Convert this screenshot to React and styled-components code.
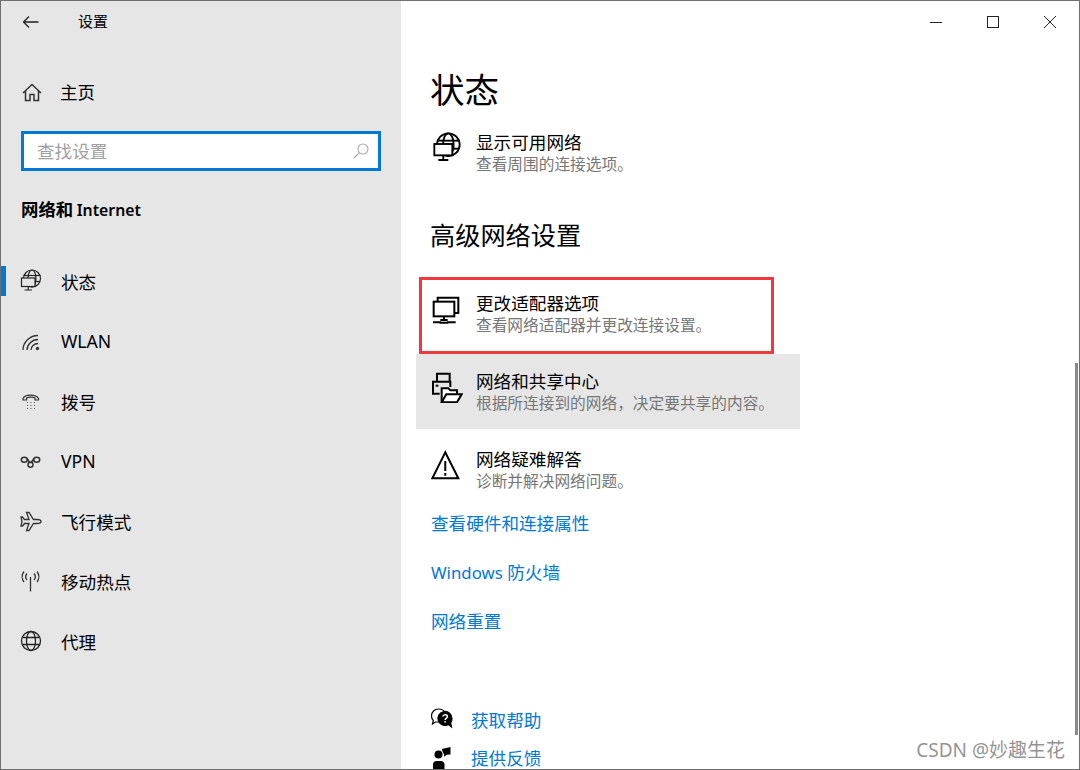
import React from "react";
import styled, { createGlobalStyle } from "styled-components";

const FONT = `"Noto Sans", "Noto Sans CJK SC", sans-serif`;

const Global = createGlobalStyle`
  html, body { margin: 0; padding: 0; background: #fff; }
  *, *::before, *::after { box-sizing: border-box; }
`;

const Window = styled.div`
  position: relative;
  display: flex;
  width: 1080px;
  height: 770px;
  overflow: hidden;
  border: 1px solid #6f6f6f;
  background: #fff;
  font-family: ${FONT};
  color: #000;
`;

const Sidebar = styled.aside`
  flex: 0 0 400px;
  display: flex;
  flex-direction: column;
  background: #e6e6e6;
`;

const TitleBar = styled.div`
  display: flex;
  align-items: center;
  gap: 35px;
  height: 41px;
  padding-left: 18px;
  font-size: 15px;
`;

const HomeRow = styled.div`
  display: flex;
  align-items: center;
  gap: 17px;
  height: 40px;
  margin-top: 30px;
  padding-left: 18px;
  font-size: 17.6px;
`;

const Label = styled.span`
  padding-bottom: 2px;
`;

const SearchBox = styled.div`
  display: flex;
  align-items: center;
  justify-content: space-between;
  width: 360px;
  height: 40px;
  margin: 19px 0 0 20px;
  padding: 0 9px 0 13px;
  background: #fff;
  border: 3px solid #0078d7;
  color: #a0a0a0;
  font-size: 17.6px;
`;

const SectionName = styled.div`
  height: 24px;
  margin: 26px 0 0 20px;
  line-height: 24px;
  font-size: 17.4px;
  font-weight: 700;
  white-space: nowrap;
`;

const Latin = styled.span`
  margin-left: -1px;
  font-size: 15.8px;
  font-weight: 600;
`;

const Nav = styled.nav`
  display: flex;
  flex-direction: column;
  margin-top: 30px;
`;

const NavItem = styled.div`
  position: relative;
  display: flex;
  align-items: center;
  gap: 18px;
  height: 60px;
  padding-left: 18px;
  font-size: 17.6px;
  &::before {
    content: "";
    display: ${(p) => (p.$active ? "block" : "none")};
    position: absolute;
    left: 0;
    top: 15px;
    width: 5px;
    height: 30px;
    background: #0078d7;
  }
`;

const Main = styled.main`
  flex: 1;
  display: flex;
  flex-direction: column;
  padding-left: 15px;
`;

const Controls = styled.div`
  display: flex;
  justify-content: flex-end;
  align-items: center;
  gap: 33px;
  height: 42px;
  padding-right: 17px;
  flex: none;
`;

const PageTitle = styled.h1`
  margin: 24px 0 0 14px;
  height: 48px;
  line-height: 46px;
  font-size: 34.5px;
  font-weight: 400;
  flex: none;
`;

const SectionTitle = styled.h2`
  margin: 24px 0 23px 14px;
  height: 36px;
  line-height: 36px;
  font-size: 25.2px;
  font-weight: 400;
  flex: none;
`;

const Row = styled.div`
  position: relative;
  flex: none;
  display: flex;
  align-items: flex-start;
  gap: 13px;
  width: 384px;
  height: 75px;
  margin-bottom: 3px;
  padding: 16px 0 0 15px;
  background: ${(p) => (p.$hover ? "#e6e6e6" : "transparent")};
  &::after {
    content: "";
    display: ${(p) => (p.$marked ? "block" : "none")};
    position: absolute;
    z-index: 1;
    left: 3px;
    top: 1px;
    width: 355px;
    height: 77px;
    border: 3px solid #f0383e;
  }
`;

const RowIcon = styled.div`
  flex: none;
  width: 32px;
  height: 32px;
  margin-top: 1px;
`;

const RowText = styled.div`
  display: flex;
  flex-direction: column;
  white-space: nowrap;
`;

const RowTitle = styled.div`
  line-height: 22px;
  font-size: 17.6px;
`;

const RowSub = styled.div`
  line-height: 22px;
  font-size: 15.7px;
  color: #767676;
`;

const Links = styled.div`
  display: flex;
  flex-direction: column;
  gap: 24.5px;
  margin: 1px 0 0 15px;
  flex: none;
`;

const LinkText = styled.a`
  display: block;
  line-height: 24px;
  font-size: 17.6px;
  color: #0078d7;
`;

const LatinLink = styled.span`
  font-size: 16.8px;
`;

const Footer = styled.div`
  display: flex;
  flex-direction: column;
  gap: 14px;
  margin: 75px 0 0 14px;
  flex: none;
`;

const FooterRow = styled.div`
  display: flex;
  align-items: center;
  gap: 17px;
  height: 24px;
`;

const Thumb = styled.div`
  position: absolute;
  right: 1px;
  top: 362px;
  width: 3px;
  height: 372px;
  background: #8a8a8a;
`;

const Watermark = styled.div`
  position: absolute;
  right: 14px;
  bottom: 7px;
  font-size: 19px;
  line-height: 24px;
  color: rgba(110, 110, 110, 0.75);
  white-space: nowrap;
`;

const Svg = ({ size = 24, stroke = "#222", sw = 1.2, children }) => (
  <svg
    width={size}
    height={size}
    viewBox="0 0 24 24"
    fill="none"
    stroke={stroke}
    strokeWidth={sw}
    style={{ flex: "none", display: "block" }}
  >
    {children}
  </svg>
);

const Back = () => (
  <Svg sw={1.3}>
    <path d="M19.5 12H4.500M10 6.500 4.500 12l5.500 5.500" />
  </Svg>
);
const Home = () => (
  <Svg sw={1.5} stroke="#333">
    <path d="M4 13 13 4.500 22 13M6.500 11v9.500H11v-6h4v6h4.500V11" />
  </Svg>
);
const Search = () => (
  <Svg size={16} stroke="#a8a8a8" sw={1.6}>
    <circle cx="15" cy="9" r="7.500" />
    <path d="M9.500 14.500 1.500 22.500" />
  </Svg>
);
const GlobeMonitor = ({ size, sw, bg, stroke }) => (
  <Svg size={size} sw={sw} stroke={stroke}>
    <circle cx="13" cy="9.500" r="8.500" />
    <ellipse cx="13" cy="9.500" rx="4" ry="8.500" />
    <path d="M4.500 6.500h17" />
    <path d="M5 12.500h16" />
    <rect x="2.500" y="9" width="13.500" height="8.500" fill={bg} />
    <path d="M9.200 17.500v3.200M5.500 21h7.500" />
  </Svg>
);
const Wifi = () => (
  <Svg sw={1.300} stroke="#333">
    <path d="M4 21C4 13 11 6.500 19 6.500" />
    <path d="M8 21c0-5.500 5-10.500 11-10.500" />
    <path d="M12 21c0-3.500 3-6.500 7-6.500" />
    <circle cx="18.500" cy="19.500" r="1.700" fill="#333" stroke="none" />
  </Svg>
);
const Dial = () => (
  <Svg sw={1.200} stroke="#333">
    <path d="M4 11V9.500C6 5 17 5 19.500 9.500V11h-3.500V9c-2-1-6-1-8.500 0v2z" />
    <path
      d="M8 13.500h1M11.500 13.500h1M15 13.500h1M8 16.500h1M11.500 16.500h1M15 16.500h1M8 19.500h1M11.500 19.500h1M15 19.500h1"
      stroke="#555"
    />
  </Svg>
);
const Vpn = () => (
  <Svg sw={1.500} stroke="#333">
    <ellipse cx="5.300" cy="10.700" rx="3" ry="2.500" />
    <ellipse cx="17.700" cy="10.700" rx="3" ry="2.500" />
    <circle cx="11.500" cy="15.800" r="2.500" />
    <path d="M8 9.500 10.800 13.500M15 9.500 12.200 13.500" />
  </Svg>
);
const Plane = () => (
  <Svg sw={1.300} stroke="#333">
    <path d="M22 12.500c0-1.200-2-2-4-2h-3.500L10 3.500H7.500l2.500 7H5.500L3.500 8H2l1 4.500L2 17h1.500l2-2.500H10l-2.500 7H10l4.500-7H18c2 0 4-.8 4-2z" />
  </Svg>
);
const Hotspot = () => (
  <Svg sw={1.300} stroke="#333">
    <path d="M11.500 8v14.500" />
    <path d="M8 4.500a5 5 0 0 0 0 6.500M15 4.500a5 5 0 0 1 0 6.500" />
    <path d="M5 2.500a8.500 8.500 0 0 0 0 10.500M18 2.500a8.500 8.500 0 0 1 0 10.500" />
  </Svg>
);
const Globe = () => (
  <Svg sw={1.300} stroke="#222">
    <circle cx="12" cy="12" r="9.500" />
    <ellipse cx="12" cy="12" rx="4.500" ry="9.500" />
    <path d="M3.500 8.500h17M3.500 15.500h17" />
  </Svg>
);
const Adapter = () => (
  <Svg size={32} sw={1.500} stroke="#000">
    <path d="M5 6.500V3.500h15.500v11.500h-3" />
    <rect x="2" y="6.500" width="15.500" height="11" fill="#fff" />
    <path d="M9.700 17.500v2M7 20.300h5.500M1.500 22h6M12 22h6.500M6.500 22.300h6.500" />
  </Svg>
);
const ShareCenter = () => (
  <Svg size={32} sw={1.500} stroke="#000">
    <path d="M4.500 8V2h9.500v6" />
    <path d="M6.500 17H1.500V8h13v4" />
    <path d="M3.500 11h2" />
    <path d="M8 23.500V13h5l1.500 1.500h5v3" fill="#fff" />
    <path d="M8 23.500 11.500 17.500H23l-3.500 6z" fill="#fff" />
  </Svg>
);
const Warning = () => (
  <Svg size={32} sw={1.500} stroke="#000">
    <path d="M10.700 2.500 1 22h19.500z" />
    <path d="M10.700 9v7.500M10.700 18v2" />
  </Svg>
);
const Help = () => (
  <Svg sw={1.200} stroke="#000">
    <path d="M9 14H5.500L2.500 16l.8-3.500C2 11.500 1.500 9.500 1.500 7.800 1.500 4 4.500 1 8.500 1c3 0 5.500 1.500 6.500 3.500" fill="#fff" />
    <path d="M22 10.500a7 7 0 1 0-3.500 6L21.500 19l-.8-4c.8-1.200 1.300-2.800 1.300-4.500z" fill="#000" />
    <path d="M12.800 8.500c.4-2.500 4.600-2.500 4.600 0 0 1.800-2.300 1.800-2.300 3.500M15.100 13v1.500" stroke="#fff" strokeWidth={1.500} />
  </Svg>
);
const Feedback = () => (
  <Svg stroke="none">
    <circle cx="8.500" cy="8.500" r="4" fill="#000" />
    <path d="M3 23v-4.500c0-2 1.500-3.500 3.500-3.500h4.500c2 0 3.500 1.500 3.500 3.500V23z" fill="#000" />
    <path d="M12 3 20.500 1v7.500l-4 .2-2.500 2v-2.500c-1-1.500-2-3.200-2-5.200z" fill="#000" />
  </Svg>
);
const Minimize = () => (
  <Svg stroke="#222" sw={1}>
    <path d="M6 12.500h12" />
  </Svg>
);
const Maximize = () => (
  <Svg stroke="#222" sw={1}>
    <rect x="6.500" y="6.500" width="11" height="11" />
  </Svg>
);
const Close = () => (
  <Svg stroke="#222" sw={1}>
    <path d="M6 6l12 12M18 6 6 18" />
  </Svg>
);

const navItems = [
  { label: "状态", icon: <GlobeMonitor size={24} sw={1.200} bg="#e6e6e6" stroke="#222" />, active: true },
  { label: "WLAN", icon: <Wifi /> },
  { label: "拨号", icon: <Dial /> },
  { label: "VPN", icon: <Vpn /> },
  { label: "飞行模式", icon: <Plane /> },
  { label: "移动热点", icon: <Hotspot /> },
  { label: "代理", icon: <Globe /> },
];

const rows = [
  { title: "更改适配器选项", sub: "查看网络适配器并更改连接设置。", icon: <Adapter />, marked: true },
  { title: "网络和共享中心", sub: "根据所连接到的网络，决定要共享的内容。", icon: <ShareCenter />, hover: true },
  { title: "网络疑难解答", sub: "诊断并解决网络问题。", icon: <Warning /> },
];

export default function App() {
  return (
    <Window>
      <Global />
      <Sidebar>
        <TitleBar>
          <Back />
          <Label>设置</Label>
        </TitleBar>
        <HomeRow>
          <Home />
          <Label>主页</Label>
        </HomeRow>
        <SearchBox>
          <Label>查找设置</Label>
          <Search />
        </SearchBox>
        <SectionName>
          网络和 <Latin>Internet</Latin>
        </SectionName>
        <Nav>
          {navItems.map((n) => (
            <NavItem key={n.label} $active={n.active}>
              {n.icon}
              <span>{n.label}</span>
            </NavItem>
          ))}
        </Nav>
      </Sidebar>
      <Main>
        <Controls>
          <Minimize />
          <Maximize />
          <Close />
        </Controls>
        <PageTitle>状态</PageTitle>
        <Row>
          <RowIcon>
            <GlobeMonitor size={32} sw={1.400} bg="#fff" stroke="#000" />
          </RowIcon>
          <RowText>
            <RowTitle>显示可用网络</RowTitle>
            <RowSub>查看周围的连接选项。</RowSub>
          </RowText>
        </Row>
        <SectionTitle>高级网络设置</SectionTitle>
        {rows.map((r) => (
          <Row key={r.title} $marked={r.marked} $hover={r.hover}>
            <RowIcon>{r.icon}</RowIcon>
            <RowText>
              <RowTitle>{r.title}</RowTitle>
              <RowSub>{r.sub}</RowSub>
            </RowText>
          </Row>
        ))}
        <Links>
          <LinkText>查看硬件和连接属性</LinkText>
          <LinkText>
            <LatinLink>Windows</LatinLink> 防火墙
          </LinkText>
          <LinkText>网络重置</LinkText>
        </Links>
        <Footer>
          <FooterRow>
            <Help />
            <LinkText>获取帮助</LinkText>
          </FooterRow>
          <FooterRow>
            <Feedback />
            <LinkText>提供反馈</LinkText>
          </FooterRow>
        </Footer>
      </Main>
      <Thumb />
      <Watermark>CSDN @妙趣生花</Watermark>
    </Window>
  );
}
